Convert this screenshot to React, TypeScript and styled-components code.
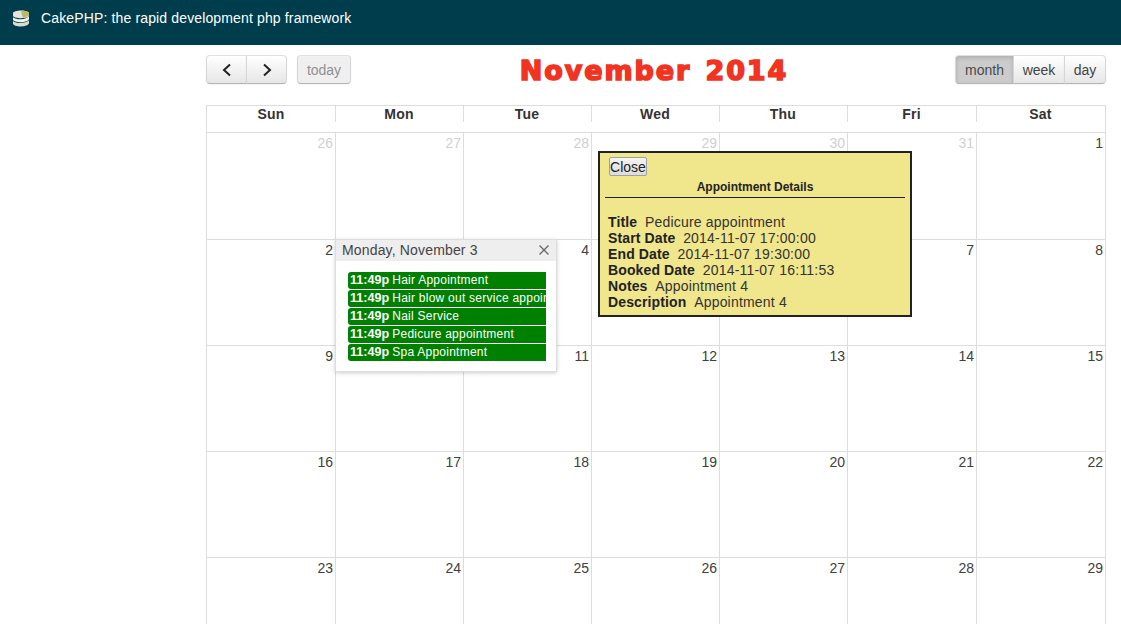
import React from 'react'
import styled, { createGlobalStyle } from 'styled-components'

const GlobalStyle = createGlobalStyle`
  html, body {
    margin: 0;
    height: 100%;
    overflow: hidden;
    background: #fff;
  }
  body {
    font-family: "Liberation Sans", Arial, sans-serif;
    font-size: 14px;
    color: #333;
  }
`

const TopBar = styled.header`
  height: 45px;
  background: #003d4c;
  display: flex;
  align-items: center;
  padding: 0 0 9px 12px;
  box-sizing: border-box;
  color: #fff;
  font-size: 14px;
`

const BrandText = styled.span`
  margin-left: 11px;
  letter-spacing: 0.14px;
`

const Calendar = styled.main`
  position: relative;
  width: 900px;
  margin-left: 206px;
`

const Toolbar = styled.div`
  height: 60px;
  padding-top: 10px;
  box-sizing: border-box;
  display: grid;
  grid-template-columns: 1fr auto 1fr;
`

const ButtonRow = styled.div<{ $end?: boolean }>`
  display: flex;
  justify-content: ${(p) => (p.$end ? 'flex-end' : 'flex-start')};
  align-items: flex-start;
`

const ToolButton = styled.button<{ $pos?: 'left' | 'right' | 'mid'; $active?: boolean; $muted?: boolean; $w: number }>`
  width: ${(p) => p.$w}px;
  height: 29px;
  padding: 0;
  font: inherit;
  font-size: 14px;
  display: flex;
  align-items: center;
  justify-content: center;
  color: ${(p) => (p.$muted ? '#8f8f8f' : p.$active ? '#4a4a4a' : '#444')};
  border: 1px solid #d4d4d4;
  border-color: #e0e0e0 #d6d6d6 #b5b5b5;
  margin-left: ${(p) => (p.$pos === 'right' || p.$pos === 'mid' ? '-1px' : '0')};
  border-radius: ${(p) =>
    p.$pos === 'left' ? '4px 0 0 4px' : p.$pos === 'right' ? '0 4px 4px 0' : p.$pos === 'mid' ? '0' : '4px'};
  background: ${(p) =>
    p.$active ? '#cccccc' : p.$muted ? '#efefef' : 'linear-gradient(to bottom, #ffffff, #e6e6e6)'};
  box-shadow: ${(p) =>
    p.$active
      ? 'inset 0 2px 4px rgba(0,0,0,.15), 0 1px 2px rgba(0,0,0,.05)'
      : 'inset 0 1px 0 rgba(255,255,255,.2), 0 1px 2px rgba(0,0,0,.05)'};
`

const Spacer = styled.div`
  width: 10px;
`

const Title = styled.h2`
  margin: 0 4px 0 0;
  font-family: "DejaVu Sans", Verdana, sans-serif;
  font-size: 27px;
  line-height: 32px;
  font-weight: 700;
  letter-spacing: 1.9px;
  word-spacing: 3px;
  color: #f23322;
  -webkit-text-stroke: 1.6px #f23322;
  white-space: nowrap;
`

const Grid = styled.div`
  display: grid;
  grid-template-columns: 129px 128px 128px 128px 128px 129px 129px;
  grid-template-rows: 27px 107px 106px 106px 106px 106px;
  border-top: 1px solid #ddd;
  border-right: 1px solid #ddd;
  width: 899px;
`

const HeadCell = styled.div<{ $first?: boolean }>`
  font-weight: bold;
  text-align: center;
  line-height: 17px;
  height: 26px;
  letter-spacing: 0.2px;
  position: relative;
  border-left: ${(p) => (p.$first ? '1px solid #ddd' : 'none')};
  border-bottom: 1px solid #ddd;
  &::before {
    content: '';
    position: absolute;
    left: 0;
    top: 0;
    height: 16px;
    width: 1px;
    background: ${(p) => (p.$first ? 'transparent' : '#ddd')};
  }
`

const DayCell = styled.div<{ $other?: boolean }>`
  border-left: 1px solid #ddd;
  border-bottom: 1px solid #ddd;
  text-align: right;
  padding: 2px 2px 0 0;
  line-height: 16px;
  color: ${(p) => (p.$other ? '#d0d0d0' : '#404040')};
`

const DayPopover = styled.section`
  position: absolute;
  left: 129px;
  top: 194px;
  width: 222px;
  height: 133px;
  background: #fff;
  border: 1px solid #ddd;
  box-shadow: 0 1px 4px rgba(0, 0, 0, 0.2);
  box-sizing: border-box;
`

const PopHead = styled.div`
  height: 21px;
  background: #eee;
  display: flex;
  justify-content: space-between;
  align-items: center;
  padding: 0 6px 1px;
  box-sizing: border-box;
  font-size: 14px;
  letter-spacing: 0.16px;
  color: #444;
`

const EventList = styled.div`
  padding: 11px 10px 0 12px;
  display: flex;
  flex-direction: column;
  gap: 1px;
`

const EventBar = styled.div`
  height: 17px;
  line-height: 17px;
  width: 198px;
  background: green;
  color: #fff;
  font-size: 12px;
  letter-spacing: 0.25px;
  padding-left: 2px;
  box-sizing: border-box;
  white-space: nowrap;
  overflow: hidden;
  border-radius: 3px 0 0 3px;
`

const EventTime = styled.b`
  font-size: 12.6px;
  letter-spacing: 0;
  margin-right: 3px;
`

const DetailBox = styled.section`
  position: absolute;
  left: 392px;
  top: 106px;
  width: 314px;
  height: 166px;
  background: khaki;
  border: 2px solid #222;
  box-sizing: border-box;
  padding: 4px 5px 0 5px;
  color: #222;
`

const CloseButton = styled.button`
  display: block;
  margin-left: 4px;
  width: 38px;
  height: 19px;
  padding: 0;
  font: inherit;
  font-size: 14px;
  background: linear-gradient(to bottom, #f4f4f4, #dcdcdc);
  border: 1px solid #a0a0a0;
  border-radius: 2px;
  color: #222;
`

const DetailTitle = styled.div`
  font-size: 12px;
  font-weight: bold;
  text-align: center;
  line-height: 14px;
  padding: 4px 0 3px;
  border-bottom: 1px solid #222;
  margin-bottom: 16px;
`

const DetailRow = styled.div`
  line-height: 16px;
  padding-left: 3px;
  white-space: pre;
`

const DetailLabel = styled.b`
  letter-spacing: 0.12px;
`

const DetailValue = styled.span`
  letter-spacing: 0.2px;
  color: #333;
`

const Logo = () => (
  <svg width="18" height="17" viewBox="0 0 18 17">
    <path d="M1 3.200C1 1.600 5 .5 9 .5s8 1.100 8 2.700v2.600C17 7.400 13 8 9 8.300 5 8.300 1 7.300 1 5.800z" fill="#e4e4da" />
    <path d="M9.500 .5c4 0 7.500 1.100 7.500 2.700v2.500L11 7.800 9.500 3.800z" fill="#b9b96a" />
    <path d="M1 7.200C3 8.800 6 9.500 9 9.300c3 0 5.600-1.200 8-2.700v2.300C17 10.600 13 12 9 12.200c-4 0-8-1-8-2.700z" fill="#f4f4ec" />
    <path d="M1 11C3 12.600 6 13.200 9 13c3 0 5.600-1.100 8-2.500v2.600C17 15 13 16.500 9 16.500c-4 0-8-1.300-8-3z" fill="#dcdcd2" />
  </svg>
)

const Chevron = ({ flip }: { flip?: boolean }) => (
  <svg width="12" height="14" viewBox="0 0 12 14">
    <path d={flip ? 'M3 1.500 9 7l-6 5.500' : 'M9 1.500 3 7l6 5.500'} fill="none" stroke="#222" strokeWidth="2" />
  </svg>
)

const HEADERS = ['Sun', 'Mon', 'Tue', 'Wed', 'Thu', 'Fri', 'Sat']
const DAYS = [26, 27, 28, 29, 30, 31, 1, 2, 3, 4, 5, 6, 7, 8, 9, 10, 11, 12, 13, 14, 15, 16, 17, 18, 19, 20, 21, 22, 23, 24, 25, 26, 27, 28, 29]
const EVENTS = ['Hair Appointment', 'Hair blow out service appointment', 'Nail Service', 'Pedicure appointment', 'Spa Appointment']
const DETAILS = [
  ['Title', 'Pedicure appointment'],
  ['Start Date', '2014-11-07 17:00:00'],
  ['End Date', '2014-11-07 19:30:00'],
  ['Booked Date', '2014-11-07 16:11:53'],
  ['Notes', 'Appointment 4'],
  ['Description', 'Appointment 4'],
]

export default function App() {
  return (
    <>
      <GlobalStyle />
      <TopBar>
        <Logo />
        <BrandText>CakePHP: the rapid development php framework</BrandText>
      </TopBar>
      <Calendar>
        <Toolbar>
          <ButtonRow>
            <ToolButton $pos="left" $w={41}><Chevron /></ToolButton>
            <ToolButton $pos="right" $w={41}><Chevron flip /></ToolButton>
            <Spacer />
            <ToolButton $muted $w={54}>today</ToolButton>
          </ButtonRow>
          <Title>November 2014</Title>
          <ButtonRow $end>
            <ToolButton $pos="left" $active $w={59}>month</ToolButton>
            <ToolButton $pos="mid" $w={52}>week</ToolButton>
            <ToolButton $pos="right" $w={42}>day</ToolButton>
          </ButtonRow>
        </Toolbar>
        <Grid>
          {HEADERS.map((h, i) => (
            <HeadCell key={h} $first={i === 0}>{h}</HeadCell>
          ))}
          {DAYS.map((d, i) => (
            <DayCell key={i} $other={i < 6}>{d}</DayCell>
          ))}
        </Grid>
        <DayPopover>
          <PopHead>
            <span>Monday, November 3</span>
            <svg width="12" height="12" viewBox="0 0 12 12">
              <path d="M1.500 1.500l9 9M10.500 1.500l-9 9" stroke="#666" strokeWidth="1.300" fill="none" />
            </svg>
          </PopHead>
          <EventList>
            {EVENTS.map((e) => (
              <EventBar key={e}><EventTime>11:49p</EventTime>{e}</EventBar>
            ))}
          </EventList>
        </DayPopover>
        <DetailBox>
          <CloseButton>Close</CloseButton>
          <DetailTitle>Appointment Details</DetailTitle>
          {DETAILS.map(([k, v]) => (
            <DetailRow key={k}><DetailLabel>{k}</DetailLabel>{'  '}<DetailValue>{v}</DetailValue></DetailRow>
          ))}
        </DetailBox>
      </Calendar>
    </>
  )
}
